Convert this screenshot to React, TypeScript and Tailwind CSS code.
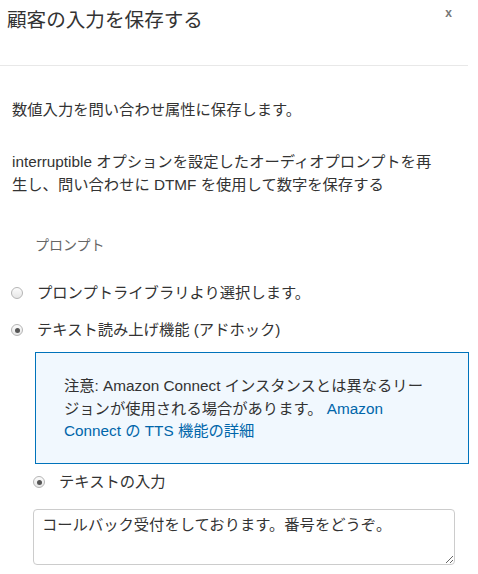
const font = { fontFamily: '"Liberation Sans", "Noto Sans CJK JP", sans-serif' };

function Radio({ checked }: { checked?: boolean }) {
  return (
    <span className="flex h-[12px] w-[12px] shrink-0 items-center justify-center rounded-full border border-[#b5b5b5] bg-gradient-to-b from-[#fcfcfc] to-[#e6e6e6]">
      {checked && <span className="h-[5px] w-[5px] rounded-full bg-[#555]" />}
    </span>
  );
}

export default function App() {
  return (
    <div
      className="h-[574px] w-[478px] overflow-hidden bg-white text-[#333]"
      style={font}
    >
      <div className="flex items-start justify-between pr-[26px] pl-[7px] pt-[5px]">
        <h2 className="text-[19.6px] leading-[30px] text-[#333]">顧客の入力を保存する</h2>
        <span className="pt-[1px] text-[12px] font-bold leading-[14px] text-[#777]">x</span>
      </div>
      <div className="mt-[30px] mr-[10px] h-px bg-[#e8e8e8]" />

      <div className="pl-[12px] pr-[10px] text-[15.3px]">
        <p className="mt-[34px] leading-[20px]">数値入力を問い合わせ属性に保存します。</p>
        <p className="mt-[30px] leading-[23px]">
          interruptible オプションを設定したオーディオプロンプトを再
          <br />
          生し、問い合わせに DTMF を使用して数字を保存する
        </p>
      </div>

      <div className="mt-[39px] pl-[35px] text-[14px] leading-[20px] text-[#666]">プロンプト</div>

      <label className="mt-[28px] flex items-center gap-[14px] pl-[11px] text-[15.3px] leading-[20px]">
        <Radio />
        <span>プロンプトライブラリより選択します。</span>
      </label>
      <label className="mt-[17px] flex items-center gap-[14px] pl-[11px] text-[15.3px] leading-[20px]">
        <Radio checked />
        <span>テキスト読み上げ機能 (アドホック)</span>
      </label>

      <div className="mt-[12px] ml-[35px] mr-[9px] h-[112px] border border-[#0073bb] bg-[#f1f8fe] px-[28px] pt-[22px] text-[15.3px] leading-[22.5px]">
        注意: Amazon Connect インスタンスとは異なるリー
        <br />
        ジョンが使用される場合があります。{' '}
        <a className="text-[#0066aa]">
          Amazon
          <br />
          Connect の TTS 機能の詳細
        </a>
      </div>

      <label className="mt-[8px] flex items-center gap-[14px] pl-[33px] text-[15.3px] leading-[20px]">
        <Radio checked />
        <span>テキストの入力</span>
      </label>

      <div className="mt-[17px] ml-[33px] mr-[23px]">
        <textarea
          defaultValue="コールバック受付をしております。番号をどうぞ。"
          className="block h-[56px] w-full resize-y rounded-[4px] border border-[#ccc] px-[8px] py-[5px] text-[15.3px] leading-[20px] text-[#333] outline-none"
          style={font}
        />
      </div>
    </div>
  );
}
